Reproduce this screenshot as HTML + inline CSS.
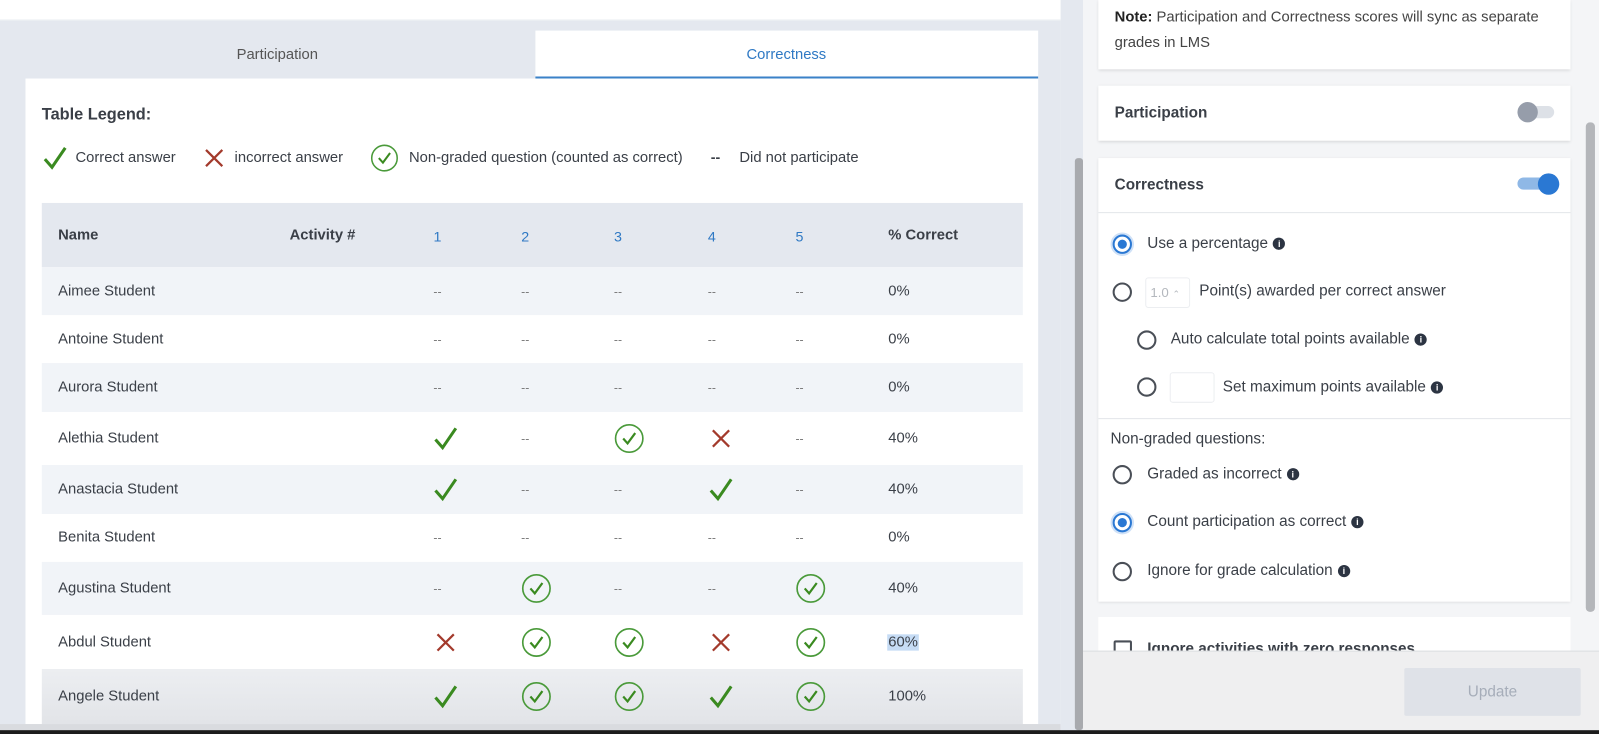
<!DOCTYPE html>
<html><head><meta charset="utf-8"><style>
*{box-sizing:border-box;margin:0;padding:0}
html,body{width:1599px;height:734px;overflow:hidden;background:#1c1c1c}
#w{position:absolute;left:0;top:0;width:1568px;height:720px;transform:scale(1.0198);transform-origin:0 0;background:#fff;font-family:"Liberation Sans",sans-serif;color:#333;overflow:hidden}
.a{position:absolute}
.t{font-size:15px;color:#3a3f47;white-space:nowrap}
.row{position:absolute;left:41px;width:962px}
.c{position:absolute;transform:translateX(-50%);font-size:12px;color:#777}
.radio{position:absolute;width:19px;height:19px;border:2px solid #4a4f57;border-radius:50%;background:#fff}
.radio.on{border-color:#2a78d3;box-shadow:0 0 0 2px #cfe1f7}
.radio.on:after{content:"";position:absolute;left:3px;top:3px;width:9px;height:9px;border-radius:50%;background:#2a78d3}
.info{display:inline-block;width:12px;height:12px;border-radius:50%;background:#2c3442;color:#fff;font-size:9px;text-align:center;line-height:12px;font-weight:bold;vertical-align:1px;margin-left:5px}
.n{font-size:14.5px}
</style></head><body><div id="w">
<div class="a" style="left:0;top:20px;width:1040px;height:714px;background:#e4e8ef"></div>
<div class="a" style="left:0;top:0;width:1040px;height:20px;background:#fff;border-bottom:1px solid #eef0f3"></div>
<div class="a t" style="left:232px;top:46px;color:#555;font-size:14.5px">Participation</div>
<div class="a" style="left:525px;top:30px;width:493px;height:47px;background:#fff;border-bottom:2px solid #3b82c8"></div>
<div class="a t" style="left:732px;top:46px;color:#2f79c4;font-size:14.5px">Correctness</div>
<div class="a" style="left:25px;top:77px;width:993px;height:633px;background:#fff"></div>
<div class="a t" style="left:41px;top:104px;font-weight:bold;font-size:16px">Table Legend:</div>
<svg class="a" style="left:41px;top:142px" width="26" height="26"><path d="M3 14 L10 22 L23 3" fill="none" stroke="#3a8a20" stroke-width="3"/></svg>
<div class="a t n" style="left:74px;top:147px">Correct answer</div>
<svg class="a" style="left:199px;top:144px" width="22" height="22"><path d="M3 3 L19 19 M19 3 L3 19" stroke="#a33a2c" stroke-width="2.2"/></svg>
<div class="a t n" style="left:230px;top:147px">incorrect answer</div>
<svg class="a" style="left:363px;top:141px" width="28" height="28"><circle cx="14" cy="14" r="12.5" fill="none" stroke="#4a9a3a" stroke-width="1.5"/><path d="M8.5 14 L12.5 18.5 L19.5 9" fill="none" stroke="#3a8a20" stroke-width="2"/></svg>
<div class="a t n" style="left:401px;top:147px">Non-graded question (counted as correct)</div>
<div class="a t" style="left:697px;top:146px;font-size:14px;font-weight:bold">--</div>
<div class="a t n" style="left:725px;top:147px">Did not participate</div>
<div class="a" style="left:41px;top:199px;width:962px;height:63px;background:#e4e8ef"></div>
<div class="a t" style="left:57px;top:223px;font-weight:bold;font-size:14.5px">Name</div>
<div class="a t" style="left:284px;top:223px;font-weight:bold;font-size:14.5px">Activity #</div>
<div class="c" style="left:429px;top:224px;color:#2f79c4;font-size:14px">1</div>
<div class="c" style="left:515px;top:224px;color:#2f79c4;font-size:14px">2</div>
<div class="c" style="left:606px;top:224px;color:#2f79c4;font-size:14px">3</div>
<div class="c" style="left:698px;top:224px;color:#2f79c4;font-size:14px">4</div>
<div class="c" style="left:784px;top:224px;color:#2f79c4;font-size:14px">5</div>
<div class="a t" style="left:871px;top:223px;font-weight:bold;font-size:14.5px">% Correct</div>
<div class="row" style="top:262px;height:47px;background:#f1f4f8"></div>
<div class="row" style="top:356px;height:48px;background:#f1f4f8"></div>
<div class="row" style="top:456px;height:48px;background:#f1f4f8"></div>
<div class="row" style="top:551px;height:52px;background:#f1f4f8"></div>
<div class="row" style="top:656px;height:54px;background:linear-gradient(#eceef1,#e2e4e8)"></div>
<div class="a" style="left:0;top:710px;width:1040px;height:20px;background:#d9dbdf"></div>
<svg width="0" height="0" style="position:absolute"><defs>
<symbol id="ck" viewBox="0 0 26 26"><path d="M3 14 L10 22 L23 3" fill="none" stroke="#3a8a20" stroke-width="3"/></symbol>
<symbol id="x" viewBox="0 0 22 22"><path d="M3 3 L19 19 M19 3 L3 19" stroke="#a33a2c" stroke-width="2.2"/></symbol>
<symbol id="ng" viewBox="0 0 28 28"><circle cx="14" cy="14" r="12.5" fill="none" stroke="#4a9a3a" stroke-width="1.5"/><path d="M8.5 14 L12.5 18.5 L19.5 9" fill="none" stroke="#3a8a20" stroke-width="2"/></symbol>
</defs></svg>
<div class="a t n" style="left:57px;top:278px">Aimee Student</div>
<div class="a t n" style="left:57px;top:325px">Antoine Student</div>
<div class="a t n" style="left:57px;top:372px">Aurora Student</div>
<div class="a t n" style="left:57px;top:422px">Alethia Student</div>
<div class="a t n" style="left:57px;top:472px">Anastacia Student</div>
<div class="a t n" style="left:57px;top:519px">Benita Student</div>
<div class="a t n" style="left:57px;top:569px">Agustina Student</div>
<div class="a t n" style="left:57px;top:622px">Abdul Student</div>
<div class="a t n" style="left:57px;top:675px">Angele Student</div>
<div class="a t n" style="left:871px;top:278px">0%</div>
<div class="a t n" style="left:871px;top:325px">0%</div>
<div class="a t n" style="left:871px;top:372px">0%</div>
<div class="a t n" style="left:871px;top:422px">40%</div>
<div class="a t n" style="left:871px;top:472px">40%</div>
<div class="a t n" style="left:871px;top:519px">0%</div>
<div class="a t n" style="left:871px;top:569px">40%</div>
<div class="a t n" style="left:870px;top:622px;background:#c6dcf5;padding:0 1px">60%</div>
<div class="a t n" style="left:871px;top:675px">100%</div>
<div class="c" style="left:429px;top:279px">--</div><div class="c" style="left:515px;top:279px">--</div><div class="c" style="left:606px;top:279px">--</div><div class="c" style="left:698px;top:279px">--</div><div class="c" style="left:784px;top:279px">--</div>
<div class="c" style="left:429px;top:326px">--</div><div class="c" style="left:515px;top:326px">--</div><div class="c" style="left:606px;top:326px">--</div><div class="c" style="left:698px;top:326px">--</div><div class="c" style="left:784px;top:326px">--</div>
<div class="c" style="left:429px;top:373px">--</div><div class="c" style="left:515px;top:373px">--</div><div class="c" style="left:606px;top:373px">--</div><div class="c" style="left:698px;top:373px">--</div><div class="c" style="left:784px;top:373px">--</div>
<div class="c" style="left:429px;top:520px">--</div><div class="c" style="left:515px;top:520px">--</div><div class="c" style="left:606px;top:520px">--</div><div class="c" style="left:698px;top:520px">--</div><div class="c" style="left:784px;top:520px">--</div>
<svg class="a" style="left:424px;top:417px" width="26" height="26"><use href="#ck"/></svg>
<div class="c" style="left:515px;top:423px">--</div>
<svg class="a" style="left:602px;top:415px" width="30" height="30"><use href="#ng"/></svg>
<svg class="a" style="left:696px;top:419px" width="22" height="22"><use href="#x"/></svg>
<div class="c" style="left:784px;top:423px">--</div>
<svg class="a" style="left:424px;top:467px" width="26" height="26"><use href="#ck"/></svg>
<div class="c" style="left:515px;top:473px">--</div>
<div class="c" style="left:606px;top:473px">--</div>
<svg class="a" style="left:694px;top:467px" width="26" height="26"><use href="#ck"/></svg>
<div class="c" style="left:784px;top:473px">--</div>
<div class="c" style="left:429px;top:570px">--</div>
<svg class="a" style="left:511px;top:562px" width="30" height="30"><use href="#ng"/></svg>
<div class="c" style="left:606px;top:570px">--</div>
<div class="c" style="left:698px;top:570px">--</div>
<svg class="a" style="left:780px;top:562px" width="30" height="30"><use href="#ng"/></svg>
<svg class="a" style="left:426px;top:619px" width="22" height="22"><use href="#x"/></svg>
<svg class="a" style="left:511px;top:615px" width="30" height="30"><use href="#ng"/></svg>
<svg class="a" style="left:602px;top:615px" width="30" height="30"><use href="#ng"/></svg>
<svg class="a" style="left:696px;top:619px" width="22" height="22"><use href="#x"/></svg>
<svg class="a" style="left:780px;top:615px" width="30" height="30"><use href="#ng"/></svg>
<svg class="a" style="left:424px;top:670px" width="26" height="26"><use href="#ck"/></svg>
<svg class="a" style="left:511px;top:668px" width="30" height="30"><use href="#ng"/></svg>
<svg class="a" style="left:602px;top:668px" width="30" height="30"><use href="#ng"/></svg>
<svg class="a" style="left:694px;top:670px" width="26" height="26"><use href="#ck"/></svg>
<svg class="a" style="left:780px;top:668px" width="30" height="30"><use href="#ng"/></svg>

<div class="a" style="left:1040px;top:0;width:22px;height:716px;background:#e4e8ef"></div>
<div class="a" style="left:1054px;top:155px;width:8px;height:561px;background:#a8aaae;border-radius:3px"></div>
<div class="a" style="left:1062px;top:0;width:506px;height:716px;background:#f4f5f7"></div>
<div class="a" style="left:1077px;top:0;width:463px;height:68px;background:#fff;box-shadow:0 1px 3px rgba(0,0,0,.12)"></div>
<div class="a" style="left:1093px;top:5px;width:440px;font-size:14.5px;line-height:25px;color:#444">
<b style="color:#222">Note:</b> Participation and Correctness scores will sync as separate grades in LMS</div>
<div class="a" style="left:1077px;top:84px;width:463px;height:54px;background:#fff;box-shadow:0 1px 3px rgba(0,0,0,.12)"></div>
<div class="a t" style="left:1093px;top:102px;font-weight:bold">Participation</div>
<div class="a" style="left:1490px;top:104px;width:34px;height:12px;border-radius:6px;background:#dde1e7"></div>
<div class="a" style="left:1488px;top:100px;width:20px;height:20px;border-radius:50%;background:#969daa"></div>
<div class="a" style="left:1077px;top:155px;width:463px;height:435px;background:#fff;box-shadow:0 1px 3px rgba(0,0,0,.12)"></div>
<div class="a" style="left:1077px;top:208px;width:463px;height:1px;background:#e3e6ea"></div>
<div class="a" style="left:1077px;top:410px;width:463px;height:1px;background:#e3e6ea"></div>
<div class="a t" style="left:1093px;top:173px;font-weight:bold">Correctness</div>
<div class="a" style="left:1488px;top:174px;width:34px;height:12px;border-radius:6px;background:#8fb8e6"></div>
<div class="a" style="left:1508px;top:170px;width:21px;height:21px;border-radius:50%;background:#2a78d3"></div>
<div class="radio on" style="left:1091px;top:230px"></div>
<div class="a t" style="left:1125px;top:230px">Use a percentage<span class="info">i</span></div>
<div class="radio" style="left:1091px;top:277px"></div>
<div class="a" style="left:1123px;top:272px;width:44px;height:30px;border:1px solid #eceef1;border-radius:3px;font-size:13px;color:#b4b8be;padding:6px 4px">1.0 <span style="font-size:9px">⌃</span></div>
<div class="a t" style="left:1176px;top:277px">Point(s) awarded per correct answer</div>
<div class="radio" style="left:1115px;top:324px"></div>
<div class="a t" style="left:1148px;top:324px">Auto calculate total points available<span class="info">i</span></div>
<div class="radio" style="left:1115px;top:370px"></div>
<div class="a" style="left:1147px;top:365px;width:44px;height:30px;border:1px solid #eceef1;border-radius:3px"></div>
<div class="a t" style="left:1199px;top:371px">Set maximum points available<span class="info">i</span></div>
<div class="a t" style="left:1089px;top:422px">Non-graded questions:</div>
<div class="radio" style="left:1091px;top:456px"></div>
<div class="a t" style="left:1125px;top:456px">Graded as incorrect<span class="info">i</span></div>
<div class="radio on" style="left:1091px;top:503px"></div>
<div class="a t" style="left:1125px;top:503px">Count participation as correct<span class="info">i</span></div>
<div class="radio" style="left:1091px;top:551px"></div>
<div class="a t" style="left:1125px;top:551px">Ignore for grade calculation<span class="info">i</span></div>
<div class="a" style="left:1077px;top:605px;width:463px;height:50px;background:#fff"></div>
<div class="a" style="left:1092px;top:628px;width:18px;height:18px;border:2px solid #4a4f57;border-radius:2px"></div>
<div class="a t" style="left:1125px;top:628px;font-weight:bold">Ignore activities with zero responses</div>
<div class="a" style="left:1062px;top:638px;width:506px;height:78px;background:#efeff0;border-top:1px solid #dcdde0"></div>
<div class="a" style="left:1377px;top:655px;width:173px;height:47px;background:#dfe2e8;border-radius:2px;text-align:center;line-height:47px;font-size:15px;color:#a6adb9">Update</div>
<div class="a" style="left:1555px;top:120px;width:9px;height:480px;background:#b4b6ba;border-radius:4px"></div>
<div class="a" style="left:0;top:716px;width:1568px;height:20px;background:#1c1c1c"></div>
</div></body></html>
